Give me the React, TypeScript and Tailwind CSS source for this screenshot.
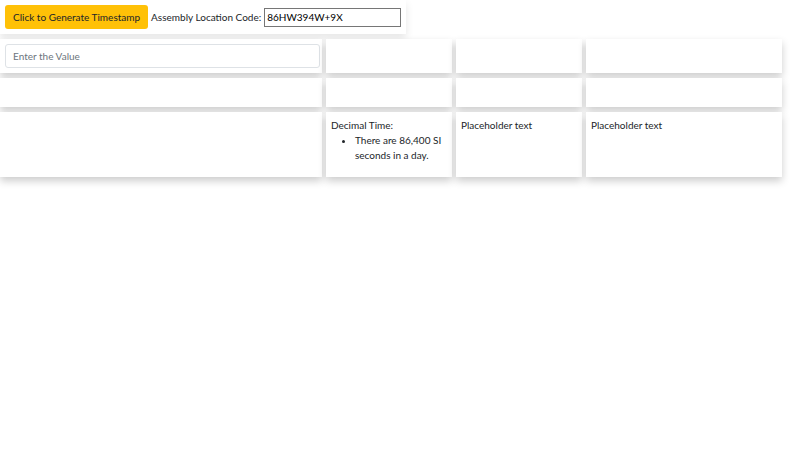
export default function App() {
  const cell = "bg-white shadow-[0_4px_8px_0_rgba(0,0,0,0.2)] px-[5px]";
  return (
    <div className="min-h-screen bg-white text-[10px] leading-[15px] text-[#212529]" style={{ fontFamily: 'Lato, sans-serif' }}>
      {/* top bar */}
      <div className="flex h-[34px] w-[406px] items-center gap-[3px] px-[5px] shadow-[0_4px_8px_0_rgba(0,0,0,0.1)]">
        <button className="h-[24px] whitespace-nowrap rounded-[3px] bg-[#ffc107] px-2 text-[10px] text-[#212529]">
          Click to Generate Timestamp
        </button>
        <span className="whitespace-nowrap">Assembly Location Code:</span>
        <input
          defaultValue="86HW394W+9X"
          className="h-[19px] w-[137px] border border-[#767676] px-[2px] text-[10px] text-black"
        />
      </div>

      <div className="mt-[5px] grid w-[782px] grid-cols-[322px_126px_126px_196px] gap-x-[4px] gap-y-[5px]">
        {/* row 1 */}
        <div className={`${cell} h-[34px] py-[5px]`}>
          <input
            placeholder="Enter the Value"
            className="h-[24px] w-[315px] rounded-[3px] border border-[#dee2e6] px-[7px] text-[10px] placeholder:text-[#6c757d]"
          />
        </div>
        <div className={`${cell} h-[34px]`}></div>
        <div className={`${cell} h-[34px]`}></div>
        <div className={`${cell} h-[34px]`}></div>

        {/* row 2 */}
        <div className={`${cell} h-[29px]`}></div>
        <div className={`${cell} h-[29px]`}></div>
        <div className={`${cell} h-[29px]`}></div>
        <div className={`${cell} h-[29px]`}></div>

        {/* row 3 */}
        <div className={`${cell} h-[65px]`}></div>
        <div className={`${cell} h-[65px] pt-[6px]`}>
          <div>Decimal Time:</div>
          <ul className="list-disc pl-[24px]">
            <li>There are 86,400 SI seconds in a day.</li>
          </ul>
        </div>
        <div className={`${cell} h-[65px] pt-[6px]`}>Placeholder text</div>
        <div className={`${cell} h-[65px] pt-[6px]`}>Placeholder text</div>
      </div>
    </div>
  );
}
